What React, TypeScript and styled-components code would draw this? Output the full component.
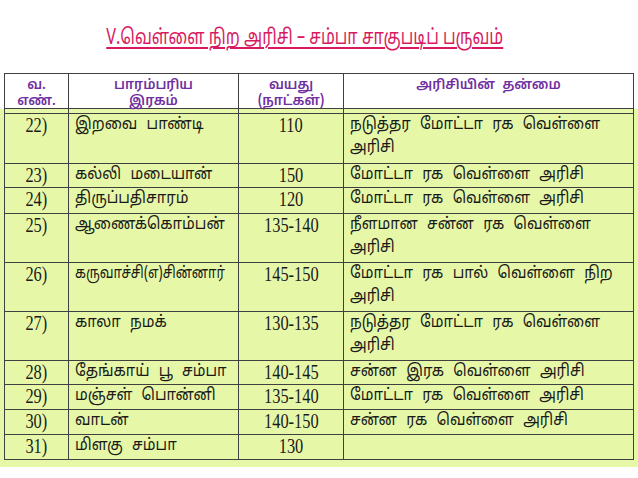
import React from 'react';
import styled, { createGlobalStyle } from 'styled-components';

const GlobalStyle = createGlobalStyle`
  html, body {
    margin: 0;
    padding: 0;
    background: #ffffff;
  }
`;

const TAMIL = `'Noto Sans Tamil', 'Lohit Tamil', 'Noto Sans', 'DejaVu Sans', sans-serif`;
const COLS = '64px 170px 105px 1fr';

const Page = styled.div`
  width: 638px;
  height: 478px;
  overflow: hidden;
`;

const TitleBar = styled.div`
  height: 73px;
  box-sizing: border-box;
  padding: 25px 28px 0 0;
  text-align: center;
`;

const Title = styled.h1`
  display: inline-block;
  margin: 0;
  font-family: ${TAMIL};
  font-size: 21px;
  line-height: 28px;
  font-weight: 400;
  color: #d81b60;
  text-decoration: underline;
  text-underline-offset: 3px;
  text-decoration-thickness: 1.5px;
  transform: scaleX(0.77);
  white-space: nowrap;
`;

const HeaderRow = styled.div`
  margin: 0 4px;
  display: grid;
  grid-template-columns: ${COLS};
  height: 36px;
  box-sizing: border-box;
  background: #ffffff;
  border: 1.5px solid #404040;
`;

const HeaderCell = styled.div<{ $last?: boolean }>`
  border-right: ${(p) => (p.$last ? 'none' : '1.5px solid #404040')};
  display: flex;
  flex-direction: column;
  align-items: center;
  padding-top: 4px;
  font-family: ${TAMIL};
  font-size: 13.5px;
  line-height: 16px;
  font-weight: 600;
  color: #7030a0;
  word-spacing: 4px;
`;

const Panel = styled.div`
  background: #e6f8a8;
  padding: 0 4px 7px 4px;
  width: 638px;
  box-sizing: border-box;
`;

const Body = styled.div`
  border-left: 1.5px solid #404040;
  border-right: 1.5px solid #404040;
`;

const Row = styled.div<{ $h: number }>`
  display: grid;
  grid-template-columns: ${COLS};
  height: ${(p) => p.$h}px;
  box-sizing: border-box;
  border-bottom: 1.5px solid #404040;
`;

const Cell = styled.div<{ $last?: boolean; $center?: boolean }>`
  border-right: ${(p) => (p.$last ? 'none' : '1.5px solid #404040')};
  display: flex;
  justify-content: ${(p) => (p.$center ? 'center' : 'flex-start')};
  align-items: flex-start;
  padding: 0 ${(p) => (p.$center ? 0 : 6)}px;
  overflow: hidden;
`;

const Num = styled.span`
  display: inline-block;
  font-family: 'Liberation Serif', 'Times New Roman', serif;
  font-size: 20px;
  line-height: 23px;
  color: #1a1a1a;
  transform: scaleX(0.82);
`;

const TamilText = styled.div<{ $squeeze?: number }>`
  display: inline-block;
  width: 111%;
  flex-shrink: 0;
  font-family: ${TAMIL};
  font-size: 16.5px;
  line-height: 23px;
  color: #1a1a1a;
  word-spacing: 6px;
  white-space: ${(p) => (p.$squeeze ? 'nowrap' : 'normal')};
  transform: scaleX(${(p) => p.$squeeze ?? 0.9});
  transform-origin: left top;
`;

type RiceRow = { no: string; name: string; days: string; desc: string; h: number; squeeze?: number };

const rows: RiceRow[] = [
  { no: '22)', name: 'இறவை பாண்டி', days: '110', desc: 'நடுத்தர மோட்டா ரக வெள்ளை அரிசி', h: 50 },
  { no: '23)', name: 'கல்லி மடையான்', days: '150', desc: 'மோட்டா ரக வெள்ளை அரிசி', h: 24 },
  { no: '24)', name: 'திருப்பதிசாரம்', days: '120', desc: 'மோட்டா ரக வெள்ளை அரிசி', h: 26 },
  { no: '25)', name: 'ஆணைக்கொம்பன்', days: '135-140', desc: 'நீளமான சன்ன ரக வெள்ளை அரிசி', h: 49 },
  { no: '26)', name: 'கருவாச்சி(எ)சின்னார்', days: '145-150', desc: 'மோட்டா ரக பால் வெள்ளை நிற அரிசி', h: 49, squeeze: 0.8 },
  { no: '27)', name: 'காலா நமக்', days: '130-135', desc: 'நடுத்தர மோட்டா ரக வெள்ளை அரிசி', h: 49 },
  { no: '28)', name: 'தேங்காய் பூ சம்பா', days: '140-145', desc: 'சன்ன இரக வெள்ளை அரிசி', h: 24 },
  { no: '29)', name: 'மஞ்சள் பொன்னி', days: '135-140', desc: 'மோட்டா ரக வெள்ளை அரிசி', h: 25 },
  { no: '30)', name: 'வாடன்', days: '140-150', desc: 'சன்ன ரக வெள்ளை அரிசி', h: 25 },
  { no: '31)', name: 'மிளகு சம்பா', days: '130', desc: '', h: 25 },
];

export default function App() {
  return (
    <Page>
      <GlobalStyle />
      <TitleBar>
        <Title>V.வெள்ளை நிற அரிசி – சம்பா சாகுபடிப் பருவம்</Title>
      </TitleBar>
      <HeaderRow>
        <HeaderCell>
          <span>வ.</span>
          <span>எண்.</span>
        </HeaderCell>
        <HeaderCell>
          <span>பாரம்பரிய</span>
          <span>இரகம்</span>
        </HeaderCell>
        <HeaderCell>
          <span>வயது</span>
          <span>(நாட்கள்)</span>
        </HeaderCell>
        <HeaderCell $last>
          <span>அரிசியின் தன்மை</span>
        </HeaderCell>
      </HeaderRow>
      <Panel>
        <Body>
          <Row $h={5}>
            <Cell />
            <Cell />
            <Cell />
            <Cell $last />
          </Row>
          {rows.map((r) => (
            <Row key={r.no} $h={r.h}>
              <Cell $center>
                <Num>{r.no}</Num>
              </Cell>
              <Cell>
                <TamilText $squeeze={r.squeeze}>{r.name}</TamilText>
              </Cell>
              <Cell $center>
                <Num>{r.days}</Num>
              </Cell>
              <Cell $last>
                <TamilText>{r.desc}</TamilText>
              </Cell>
            </Row>
          ))}
        </Body>
      </Panel>
    </Page>
  );
}
